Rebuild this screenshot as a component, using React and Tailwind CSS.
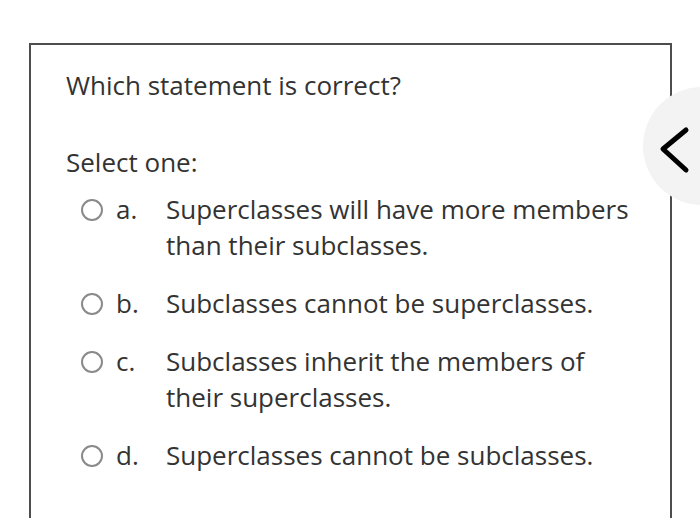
export default function App() {
  const opts = [
    { l: "a.", t: ["Superclasses will have more members", "than their subclasses."] },
    { l: "b.", t: ["Subclasses cannot be superclasses."] },
    { l: "c.", t: ["Subclasses inherit the members of", "their superclasses."] },
    { l: "d.", t: ["Superclasses cannot be subclasses."] },
  ];
  return (
    <div className="relative w-[700px] h-[518px] overflow-hidden bg-white text-[#333333]" style={{ fontFamily: '"Open Sans", sans-serif' }}>
      <div className="absolute left-[29px] top-[43px] w-[643px] h-[500px] border-2 border-[#4d4d4d]">
        <div className="pl-[35px] pt-[22px]">
          <div className="text-[26px] leading-[36px]">Which statement is correct?</div>
          <div className="text-[26px] leading-[36px] mt-[41px]">Select one:</div>
          <div className="flex flex-col gap-[22px] mt-[11px]">
            {opts.map((o) => (
              <div key={o.l} className="flex text-[26px] leading-[36px]">
                <div className="w-[50px] flex items-start pl-[15px] pt-[8px] shrink-0">
                  <div className="w-[22px] h-[22px] rounded-full border-2 border-[#8a8a8a]" />
                </div>
                <div className="w-[50px] shrink-0">{o.l}</div>
                <div>
                  {o.t.map((x) => (
                    <div key={x}>{x}</div>
                  ))}
                </div>
              </div>
            ))}
          </div>
        </div>
      </div>
      <div className="absolute left-[643px] top-[87px] w-[118px] h-[118px] rounded-full bg-[#f3f3f3] flex items-center">
        <svg width="40" height="56" viewBox="0 0 40 56" className="ml-[13px]">
          <path d="M30 12 L7 31 L30 52" fill="none" stroke="#000" strokeWidth="5" strokeLinecap="round" strokeLinejoin="round" />
        </svg>
      </div>
    </div>
  );
}
